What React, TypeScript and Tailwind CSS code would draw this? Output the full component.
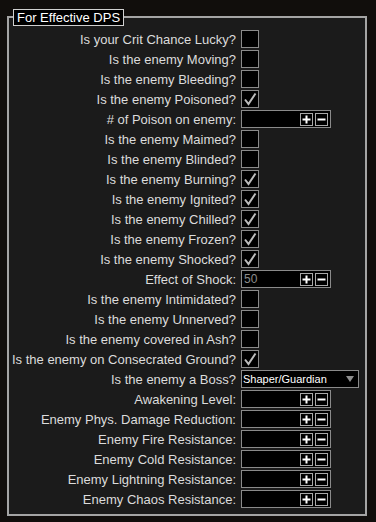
import React from 'react';

type Row =
  | { kind: 'check'; label: string; checked?: boolean }
  | { kind: 'spin'; label: string; value?: string }
  | { kind: 'select'; label: string; value: string };

const rows: Row[] = [
  { kind: 'check', label: 'Is your Crit Chance Lucky?' },
  { kind: 'check', label: 'Is the enemy Moving?' },
  { kind: 'check', label: 'Is the enemy Bleeding?' },
  { kind: 'check', label: 'Is the enemy Poisoned?', checked: true },
  { kind: 'spin', label: '# of Poison on enemy:' },
  { kind: 'check', label: 'Is the enemy Maimed?' },
  { kind: 'check', label: 'Is the enemy Blinded?' },
  { kind: 'check', label: 'Is the enemy Burning?', checked: true },
  { kind: 'check', label: 'Is the enemy Ignited?', checked: true },
  { kind: 'check', label: 'Is the enemy Chilled?', checked: true },
  { kind: 'check', label: 'Is the enemy Frozen?', checked: true },
  { kind: 'check', label: 'Is the enemy Shocked?', checked: true },
  { kind: 'spin', label: 'Effect of Shock:', value: '50' },
  { kind: 'check', label: 'Is the enemy Intimidated?' },
  { kind: 'check', label: 'Is the enemy Unnerved?' },
  { kind: 'check', label: 'Is the enemy covered in Ash?' },
  { kind: 'check', label: 'Is the enemy on Consecrated Ground?', checked: true },
  { kind: 'select', label: 'Is the enemy a Boss?', value: 'Shaper/Guardian' },
  { kind: 'spin', label: 'Awakening Level:' },
  { kind: 'spin', label: 'Enemy Phys. Damage Reduction:' },
  { kind: 'spin', label: 'Enemy Fire Resistance:' },
  { kind: 'spin', label: 'Enemy Cold Resistance:' },
  { kind: 'spin', label: 'Enemy Lightning Resistance:' },
  { kind: 'spin', label: 'Enemy Chaos Resistance:' },
];

function CheckBox({ checked }: { checked?: boolean }) {
  return (
    <div className="w-[18px] h-[18px] border border-[#8a8a8a] bg-black flex items-center justify-center">
      {checked && (
        <svg width="16" height="16" viewBox="0 0 16 16">
          <path d="M3 8.5 L6.5 13 L13.5 2.5" fill="none" stroke="#bdbdbd" strokeWidth="2" />
        </svg>
      )}
    </div>
  );
}

function StepButton({ minus }: { minus?: boolean }) {
  return (
    <div className="w-[13px] h-[13px] border border-[#a8a8a8] bg-black flex items-center justify-center">
      <svg width="9" height="9" viewBox="0 0 9 9">
        <rect x="0.5" y="3.5" width="8" height="2" fill="#ffffff" />
        {!minus && <rect x="3.5" y="0.5" width="2" height="8" fill="#ffffff" />}
      </svg>
    </div>
  );
}

function SpinBox({ value }: { value?: string }) {
  return (
    <div className="w-[90px] h-[18px] border border-[#8a8a8a] bg-black flex items-center pl-[2px] pr-[2px]">
      <span className="flex-1 text-[12px] leading-none text-[#8c8c8c]">{value}</span>
      <div className="flex gap-[2px]">
        <StepButton />
        <StepButton minus />
      </div>
    </div>
  );
}

function Select({ value }: { value: string }) {
  return (
    <div className="w-[118px] h-[18px] border border-[#8a8a8a] bg-black flex items-center pl-[1px] pr-[4px]">
      <span className="flex-1 text-[11px] leading-none text-white">{value}</span>
      <svg width="8" height="6" viewBox="0 0 8 6">
        <path d="M0 0 H8 L4 6 Z" fill="#8e8e8e" />
      </svg>
    </div>
  );
}

export default function App() {
  return (
    <div
      className="relative w-[376px] h-[522px] bg-[#110e0c] pt-[16px] pl-[7px]"
      style={{ fontFamily: '"Liberation Sans", Arial, sans-serif' }}
    >
      <div className="w-[360px] h-[500px] border-2 border-[#a4a4a4] bg-[#1b1b1b] pt-[12px]">
        <div className="flex flex-col gap-[2px]">
          {rows.map((r) => (
            <div key={r.label} className="flex items-center h-[18px]">
              <div className="w-[232px] pr-[5px] text-right text-[13px] leading-none text-[#dcdcdc] whitespace-nowrap">
                {r.label}
              </div>
              {r.kind === 'check' && <CheckBox checked={r.checked} />}
              {r.kind === 'spin' && <SpinBox value={r.value} />}
              {r.kind === 'select' && <Select value={r.value} />}
            </div>
          ))}
        </div>
      </div>
      <div className="absolute left-[13px] top-[9px] h-[17px] border border-[#d0d0d0] bg-black px-[3px] flex items-center text-[13px] leading-none text-white">
        For Effective DPS
      </div>
    </div>
  );
}
